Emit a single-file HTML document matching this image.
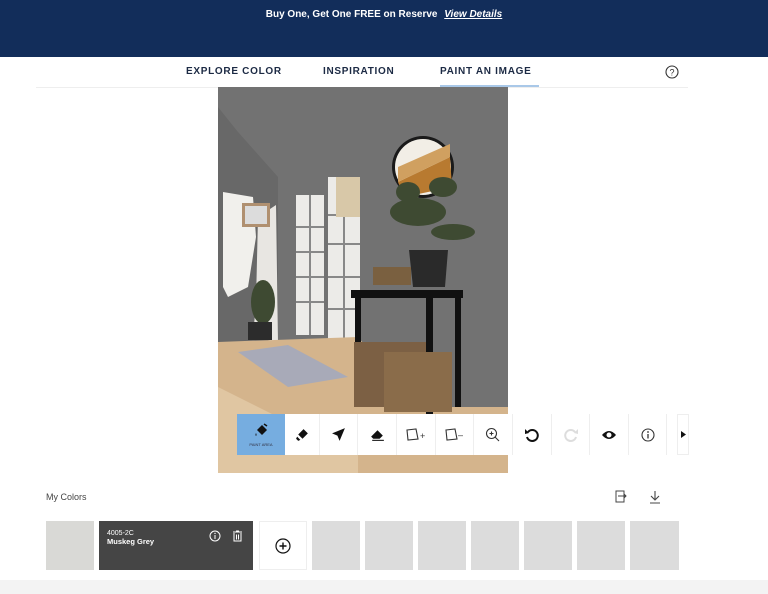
<!DOCTYPE html>
<html><head><style>
*{margin:0;padding:0;box-sizing:border-box}
body{width:768px;height:594px;overflow:hidden;background:#fff;font-family:"Liberation Sans",sans-serif;position:relative}
.banner{position:absolute;left:0;top:0;width:768px;height:57px;background:#122d5a;color:#fff;font-size:10px;font-weight:bold;text-align:center;padding-top:9px}
.banner i{text-decoration:underline;margin-left:4px}
.nav{position:absolute;top:66px;font-size:10px;font-weight:bold;letter-spacing:0.7px;color:#1c2a44}
.abs{position:absolute}
.tb{position:absolute;top:414px;height:41px;background:#fff;border-right:1px solid #eee;display:flex;align-items:center;justify-content:center}
.sw{position:absolute;top:521px;height:49px;background:#dcdcdc}
</style></head><body>
<div class="banner">Buy One, Get One FREE on Reserve <i>View Details</i></div>
<div class="nav" style="left:186px">EXPLORE COLOR</div>
<div class="nav" style="left:323px">INSPIRATION</div>
<div class="nav" style="left:440px">PAINT AN IMAGE</div>
<div class="abs" style="left:440px;top:85px;width:99px;height:2px;background:#a9c8e8"></div>
<div class="abs" style="left:36px;top:87px;width:652px;height:1px;background:#eee"></div>
<svg class="abs" style="left:665px;top:65px" width="14" height="14" viewBox="0 0 14 14"><circle cx="7" cy="7" r="6" fill="none" stroke="#333" stroke-width="1.1"/><text x="7" y="10.5" font-size="9" text-anchor="middle" fill="#333" font-family="Liberation Sans">?</text></svg>

<svg class="abs" style="left:218px;top:87px" width="290" height="386" viewBox="0 0 290 386">
<rect width="290" height="386" fill="#727272"/>
<path d="M0 20 L20 45 L60 90 L60 270 L0 270Z" fill="#686868"/>
<path d="M5 105 L35 110 L38 150 L30 200 L10 210 L5 200Z" fill="#f1f0ec"/>
<path d="M40 130 L58 118 L60 255 L35 250 L38 215Z" fill="#e8e6e2"/>
<rect x="24" y="116" width="28" height="24" fill="#b09070"/><rect x="27" y="119" width="22" height="18" fill="#dcdcdc"/>
<rect x="78" y="108" width="28" height="140" fill="#ecebe8"/>
<rect x="110" y="90" width="32" height="170" fill="#ecebe8"/>
<g stroke="#888" stroke-width="2"><line x1="78" y1="140" x2="106" y2="140"/><line x1="78" y1="165" x2="106" y2="165"/><line x1="78" y1="190" x2="106" y2="190"/><line x1="78" y1="215" x2="106" y2="215"/><line x1="110" y1="128" x2="142" y2="128"/><line x1="110" y1="157" x2="142" y2="157"/><line x1="110" y1="190" x2="142" y2="190"/><line x1="110" y1="222" x2="142" y2="222"/><line x1="92" y1="108" x2="92" y2="248"/><line x1="126" y1="90" x2="126" y2="260"/></g>
<rect x="118" y="90" width="24" height="40" fill="#d8c8a8"/>
<path d="M0 255 L140 250 L200 320 L290 320 L290 386 L0 386Z" fill="#d4b48c"/>
<path d="M0 300 L60 330 L140 340 L140 386 L0 386Z" fill="#e0c6a2"/>
<path d="M20 265 L70 258 L130 290 L70 300Z" fill="#a8aab8"/>
<circle cx="205" cy="80" r="31" fill="#1a1a1a"/><circle cx="205" cy="80" r="28" fill="#f2eee6"/>
<path d="M180 95 L232 70 L234 100 L186 110Z" fill="#b87a30"/>
<path d="M180 80 L232 57 L232 70 L180 95Z" fill="#d0a060"/>
<g fill="#3e4a32"><ellipse cx="200" cy="125" rx="28" ry="14"/><ellipse cx="235" cy="145" rx="22" ry="8"/><ellipse cx="190" cy="105" rx="12" ry="10"/><ellipse cx="225" cy="100" rx="14" ry="10"/><ellipse cx="45" cy="215" rx="12" ry="22"/></g>
<path d="M191 163 L230 163 L227 200 L195 200Z" fill="#2a2a2a"/>
<rect x="155" y="180" width="38" height="18" fill="#7a6040"/>
<rect x="133" y="203" width="112" height="8" fill="#111"/>
<rect x="137" y="210" width="6" height="110" fill="#111"/><rect x="208" y="210" width="7" height="118" fill="#111"/><rect x="237" y="210" width="6" height="110" fill="#111"/>
<rect x="136" y="255" width="72" height="65" fill="#7c6044"/><rect x="166" y="265" width="68" height="60" fill="#8a6c4a"/>
<rect x="30" y="235" width="24" height="18" fill="#2c2c2c"/>
</svg>

<div class="abs" style="left:237px;top:414px;width:48px;height:41px;background:#76ade0;display:flex;flex-direction:column;align-items:center;justify-content:center">
<svg width="16" height="16" viewBox="0 0 16 16"><path d="M4 7 L9 2 L14 7 L9 12Z" fill="#111"/><path d="M3 10 q-1 2 0 3 q1 -1 0 -3Z" fill="#111"/><path d="M11 1 l3 2" stroke="#111" stroke-width="1.5"/></svg>
<div style="font-size:4px;color:#334;margin-top:3px">PAINT AREA</div></div>
<div class="tb" style="left:285px;width:35px"><svg width="15" height="15" viewBox="0 0 14 14"><path d="M3 7 L8 2 L12 6 L7 11Z M2 9 L5 12 L3 13 L1 11Z" fill="#111"/></svg></div>
<div class="tb" style="left:320px;width:38px"><svg width="15" height="15" viewBox="0 0 14 14"><path d="M13 1 L1 6 L6 8 L8 13Z" fill="#111"/></svg></div>
<div class="tb" style="left:358px;width:39px"><svg width="17" height="15" viewBox="0 0 16 14"><path d="M2 9 L8 3 L13 8 L10 11 L4 11Z" fill="#111"/><path d="M3 12.5 H14" stroke="#111"/></svg></div>
<div class="tb" style="left:397px;width:39px"><svg width="22" height="16" viewBox="0 0 22 16"><path d="M2 3 L11 2 L13 12 L3 13Z" fill="none" stroke="#333" stroke-width="1.1"/><text x="15" y="12" font-size="9" fill="#333">+</text></svg></div>
<div class="tb" style="left:436px;width:38px"><svg width="22" height="16" viewBox="0 0 22 16"><path d="M2 3 L11 2 L13 12 L3 13Z" fill="none" stroke="#333" stroke-width="1.1"/><text x="14" y="11" font-size="9" fill="#333">–</text></svg></div>
<div class="tb" style="left:474px;width:39px"><svg width="16" height="16" viewBox="0 0 16 16"><circle cx="6.5" cy="6.5" r="5" fill="none" stroke="#333" stroke-width="1.1"/><path d="M10 10 L14 14 M4.5 6.5 H8.5 M6.5 4.5 V8.5" stroke="#333" stroke-width="1.1"/></svg></div>
<div class="tb" style="left:513px;width:39px"><svg width="16" height="16" viewBox="0 0 16 16"><path d="M4 5 A5.5 5.5 0 1 1 3 10" fill="none" stroke="#111" stroke-width="2"/><path d="M1 2 L5 6 L1 7Z" fill="#111"/></svg></div>
<div class="tb" style="left:552px;width:38px"><svg width="16" height="16" viewBox="0 0 16 16"><path d="M12 5 A5.5 5.5 0 1 0 13 10" fill="none" stroke="#ddd" stroke-width="2"/><path d="M15 2 L11 6 L15 7Z" fill="#ddd"/></svg></div>
<div class="tb" style="left:590px;width:39px"><svg width="16" height="12" viewBox="0 0 16 12"><path d="M1 6 Q8 -2 15 6 Q8 14 1 6Z" fill="#111"/><circle cx="8" cy="6" r="2.5" fill="#fff"/></svg></div>
<div class="tb" style="left:629px;width:38px"><svg width="14" height="14" viewBox="0 0 14 14"><circle cx="7" cy="7" r="6" fill="none" stroke="#333" stroke-width="1.1"/><path d="M7 6 V10.5" stroke="#333" stroke-width="1.3"/><circle cx="7" cy="4" r=".9" fill="#333"/></svg></div>
<div class="tb" style="left:677px;width:12px;border:1px solid #eee"><svg width="5" height="7"><path d="M0 0 L5 3.5 L0 7Z" fill="#111"/></svg></div>

<div class="abs" style="left:46px;top:492px;font-size:9px;color:#444">My Colors</div>
<svg class="abs" style="left:614px;top:490px" width="14" height="14" viewBox="0 0 14 14"><rect x="2" y="1" width="8" height="11" fill="none" stroke="#444"/><path d="M4 6 H12 M10 4 L12 6 L10 8" stroke="#444" fill="none"/></svg>
<svg class="abs" style="left:649px;top:490px" width="12" height="14" viewBox="0 0 12 14"><path d="M6 1 V9 M2 6 L6 10 L10 6 M1 13 H11" stroke="#444" fill="none" stroke-width="1.1"/></svg>
<div class="sw" style="left:46px;width:48px;background:#d9d9d6"></div>
<div class="sw" style="left:99px;width:154px;background:#454545;color:#fff;padding:9px 8px;font-size:7px">4005-2C<br><b style="font-size:7.5px">Muskeg Grey</b>
<svg class="abs" style="left:110px;top:9px" width="12" height="12" viewBox="0 0 12 12"><circle cx="6" cy="6" r="5" fill="none" stroke="#fff"/><path d="M6 5 V9" stroke="#fff"/><circle cx="6" cy="3.4" r=".7" fill="#fff"/></svg>
<svg class="abs" style="left:133px;top:9px" width="11" height="12" viewBox="0 0 11 12"><path d="M1 2 H10 M4 1 H7 M2 3 V11 H9 V3 M4.5 4.5 V9.5 M6.5 4.5 V9.5" stroke="#fff" fill="none"/></svg></div>
<div class="sw" style="left:259px;width:48px;background:#fff;border:1px solid #eee;display:flex;align-items:center;justify-content:center"><svg width="16" height="16" viewBox="0 0 16 16"><circle cx="8" cy="8" r="7" fill="none" stroke="#111" stroke-width="1.2"/><path d="M8 4.5 V11.5 M4.5 8 H11.5" stroke="#111" stroke-width="1.4"/></svg></div>
<div class="sw" style="left:312px;width:48px"></div>
<div class="sw" style="left:365px;width:48px"></div>
<div class="sw" style="left:418px;width:48px"></div>
<div class="sw" style="left:471px;width:48px"></div>
<div class="sw" style="left:524px;width:48px"></div>
<div class="sw" style="left:577px;width:48px"></div>
<div class="sw" style="left:630px;width:49px"></div>
<div class="abs" style="left:0;top:580px;width:768px;height:14px;background:#f3f3f3"></div>
</body></html>
